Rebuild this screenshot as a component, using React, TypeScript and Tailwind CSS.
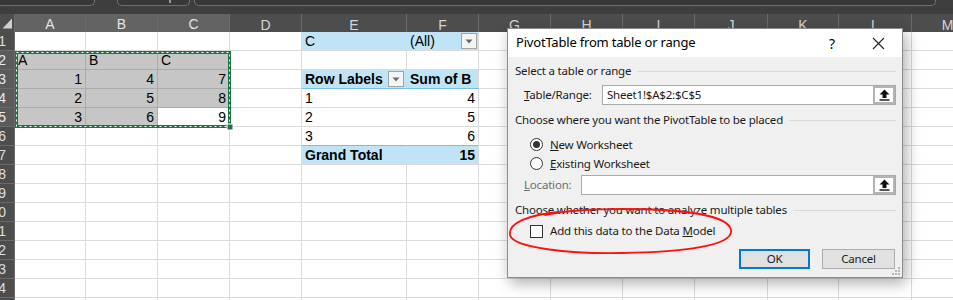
import React from 'react';

const GRID = 'grid grid-cols-[15px_71px_72px_72px_72px_105px_72px_72px_72px_72px_73px_71px_73px_72px]';
const COLS = ['A', 'B', 'C', 'D', 'E', 'F', 'G', 'H', 'I', 'J', 'K', 'L', 'M'];
const ROWS = [1, 2, 3, 4, 5, 6, 7, 8, 9, 10, 11, 12, 13, 14, 15];

const data: Record<number, string[]> = {
  2: ['A', 'B', 'C'],
  3: ['1', '4', '7'],
  4: ['2', '5', '8'],
  5: ['3', '6', '9'],
};

function Dropdown() {
  return (
    <div className="ml-auto flex h-[16px] w-[16px] shrink-0 items-center justify-center border border-[#a3a3a3] bg-[#f4f4f4]">
      <svg width="8" height="5" viewBox="0 0 8 5"><path d="M0.5 0.5h7L4 4.5z" fill="#6b6b6b" /></svg>
    </div>
  );
}

function Cell({ r, c }: { r: number; c: number }) {
  const base = 'flex h-[19px] items-center overflow-hidden whitespace-nowrap border-b border-r px-[3px] text-[14px] text-black';

  // source data A2:C5
  if (c < 3 && data[r]) {
    const txt = data[r][c];
    const white = r === 5 && c === 2;
    return (
      <div className={`${base} ${white ? 'bg-white' : 'bg-[#c6c6c6]'} border-[#ababab] ${r === 2 ? 'justify-start' : 'justify-end'}`}>
        {txt}
      </div>
    );
  }

  // pivot table E1:F7
  if (c === 4 || c === 5) {
    const first = c === 4;
    if (r === 1) {
      return (
        <div className={`${base} bg-[#c0e4f5] ${first ? 'border-[#c0e4f5] border-b-[#dadada]' : 'border-[#dadada] pr-[1px]'}`}>
          {first ? 'C' : <><span>(All)</span><Dropdown /></>}
        </div>
      );
    }
    if (r === 3) {
      return (
        <div className={`${base} bg-[#c0e4f5] font-bold border-b-[#7cbde6] ${first ? 'border-r-[#c0e4f5] pr-[2px]' : 'border-r-[#dadada]'}`}>
          {first ? <><span>Row Labels</span><Dropdown /></> : 'Sum of B'}
        </div>
      );
    }
    if (r >= 4 && r <= 6) {
      const v = first ? String(r - 3) : String(r);
      return (
        <div className={`${base} bg-white ${r === 6 ? 'border-b-[#7cbde6]' : 'border-b-[#dadada]'} ${first ? 'justify-start border-r-white' : 'justify-end border-r-[#dadada]'}`}>
          {v}
        </div>
      );
    }
    if (r === 7) {
      return (
        <div className={`${base} bg-[#c0e4f5] font-bold ${first ? 'justify-start border-[#c0e4f5] border-b-[#dadada]' : 'justify-end border-[#dadada]'}`}>
          {first ? 'Grand Total' : '15'}
        </div>
      );
    }
  }

  return <div className={`${base} border-[#dadada] bg-white`} />;
}

function UpArrowButton() {
  return (
    <div className="ml-auto flex h-full w-[22px] shrink-0 items-center justify-center border-2 border-[#b4b4b4] bg-white">
      <svg width="11" height="12" viewBox="0 0 11 12">
        <path d="M5.5 0.5L10.5 5.5H7.5V9H3.5V5.5H0.5z" fill="#111" />
        <rect x="0.5" y="10.3" width="10" height="1.4" fill="#111" />
      </svg>
    </div>
  );
}

function SectionHeader({ children }: { children: React.ReactNode }) {
  return (
    <div className="flex h-[20px] items-center">
      <span className="whitespace-nowrap">{children}</span>
      <div className="ml-[6px] h-px flex-1 bg-[#d9d9d9]" />
    </div>
  );
}

function Radio({ checked, children }: { checked?: boolean; children: React.ReactNode }) {
  return (
    <div className="flex h-[19px] items-center pl-[15px]">
      <div className="flex h-[13px] w-[13px] items-center justify-center rounded-full border border-[#333] bg-white">
        {checked && <div className="h-[7px] w-[7px] rounded-full bg-[#333]" />}
      </div>
      <span className="ml-[7px]">{children}</span>
    </div>
  );
}

function PivotDialog() {
  return (
    <div className="absolute left-[507px] top-[28px] flex h-[250px] w-[396px] flex-col border border-[#8c8c8c] bg-[#f0f0f0] font-['Noto_Sans',sans-serif] text-[11.5px] tracking-[-0.2px] text-[#1a1a1a] shadow-[3px_5px_14px_rgba(0,0,0,0.33)]">
      <div className="flex h-[28px] shrink-0 items-center bg-white pl-[8px] text-[13px] text-black">
        <span>PivotTable from table or range</span>
        <span className="ml-auto mr-[37px] text-[14px]">?</span>
        <svg className="mr-[17px]" width="13" height="13" viewBox="0 0 13 13">
          <path d="M1 1L12 12M12 1L1 12" stroke="#222" strokeWidth="1.1" />
        </svg>
      </div>

      <div className="flex flex-col pl-[7px] pr-[6px]">
        <div className="mt-[4px]"><SectionHeader>Select a table or range</SectionHeader></div>

        <div className="mt-[4px] flex h-[20px] items-center">
          <span className="w-[87px] pl-[9px]"><u>T</u>able/Range:</span>
          <div className="flex h-[20px] flex-1 items-center border border-[#a9a9a9] bg-white pl-[4px]">
            <span>Sheet1!$A$2:$C$5</span>
            <UpArrowButton />
          </div>
        </div>

        <div className="mt-[5px]"><SectionHeader>Choose where you want the PivotTable to be placed</SectionHeader></div>

        <div className="mt-[5px]">
          <Radio checked><u>N</u>ew Worksheet</Radio>
          <Radio><u>E</u>xisting Worksheet</Radio>
        </div>

        <div className="mt-[2px] flex h-[20px] items-center">
          <span className="w-[66px] pl-[9px] text-[#6d6d6d]"><u>L</u>ocation:</span>
          <div className="flex h-[20px] flex-1 items-center border border-[#a9a9a9] bg-white">
            <UpArrowButton />
          </div>
        </div>

        <div className="mt-[5px]"><SectionHeader>Choose whether you want to analyze multiple tables</SectionHeader></div>

        <div className="mt-[1px] flex h-[20px] items-center pl-[15px]">
          <div className="h-[13px] w-[13px] border border-[#333] bg-white" />
          <span className="ml-[7px]">Add this data to the Data <u>M</u>odel</span>
        </div>

        <div className="mt-[8px] flex h-[20px] justify-end gap-[12px] pr-[1px]">
          <button className="flex w-[71px] items-center justify-center border-2 border-[#0078d7] bg-[#e1e1e1]">OK</button>
          <button className="flex w-[73px] items-center justify-center border border-[#adadad] bg-[#e1e1e1]">Cancel</button>
        </div>
      </div>

      <svg className="absolute bottom-[2px] right-[2px]" width="8" height="8" viewBox="0 0 8 8" fill="#b5b5b5">
        <rect x="6" y="0" width="2" height="2" />
        <rect x="3" y="3" width="2" height="2" />
        <rect x="6" y="3" width="2" height="2" />
        <rect x="0" y="6" width="2" height="2" />
        <rect x="3" y="6" width="2" height="2" />
        <rect x="6" y="6" width="2" height="2" />
      </svg>
    </div>
  );
}

export default function App() {
  return (
    <div className="relative h-[300px] w-[953px] overflow-hidden bg-white font-['Liberation_Sans',Arial,sans-serif]">
      {/* formula bar remnants */}
      <div className="flex h-[14px] items-start bg-[#3e3e3e]">
        <div className="-ml-[5px] h-[6px] w-[100px] rounded-b-[5px] border border-t-0 border-[#717171] bg-[#383838]" />
        <div className="ml-[22px] flex h-[6px] w-[73px] justify-end rounded-b-[5px] border border-t-0 border-[#717171] bg-[#383838] pr-[18px]">
          <div className="h-[3px] w-[2px] bg-[#999]" />
        </div>
        <div className="ml-[4px] h-[6px] w-[742px] rounded-b-[5px] border border-t-0 border-[#717171] bg-[#383838]" />
      </div>

      {/* column headers */}
      <div className={`${GRID} h-[18px] bg-[#4d4d4d]`}>
        <div className="relative border-r border-[#6a6a6a]">
          <svg className="absolute left-[2px] top-[4px]" width="11" height="11" viewBox="0 0 11 11">
            <path d="M10 0.5V10.5H0.5z" fill="#cfcfcf" />
          </svg>
        </div>
        {COLS.map((col, i) =>
          i < 3 ? (
            <div key={col} className="flex items-center justify-center border-b-2 border-r border-[#6a6a6a] border-b-[#217346] bg-[#636363] text-[14px] text-[#e4e4e4]">
              {col}
            </div>
          ) : (
            <div key={col} className="flex items-center justify-center border-r border-[#6a6a6a] text-[14px] text-[#d6d6d6]">
              {col}
            </div>
          )
        )}
      </div>

      {/* sheet rows, row numbers scrolled partly out of view */}
      {ROWS.map(r => (
        <div key={r} className={GRID}>
          <div className={`flex h-[19px] items-center justify-end overflow-hidden border-b border-r border-[#6a6a6a] pr-[8px] text-[14px] ${r >= 2 && r <= 5 ? 'bg-[#5a5a5a] text-[#eaeaea]' : 'bg-[#4d4d4d] text-[#dedede]'}`}>
            {r}
          </div>
          {COLS.map((col, c) => <Cell key={col} r={r} c={c} />)}
        </div>
      ))}

      {/* copy marquee */}
      <svg className="pointer-events-none absolute inset-0" width="953" height="300" viewBox="0 0 953 300">
        <rect x="16.5" y="52.5" width="213" height="74" fill="none" stroke="#217346" strokeWidth="3" />
        <rect x="16.5" y="52.5" width="213" height="74" fill="none" stroke="#ffffff" strokeWidth="1" strokeDasharray="2 3" />
        <rect x="227" y="124" width="6" height="6" fill="#217346" stroke="#fff" strokeWidth="1" />
      </svg>

      <PivotDialog />

      {/* red annotation */}
      <svg className="pointer-events-none absolute inset-0" width="953" height="300" viewBox="0 0 953 300">
        <path
          d="M558 212 C528 215 508 223 510 235 C513 248 570 254 622 253 C682 252 734 246 731 230 C728 215 682 209 622 209 C588 209 565 211 545 215"
          fill="none"
          stroke="#ff1010"
          strokeWidth="1.8"
          strokeLinecap="round"
        />
      </svg>
    </div>
  );
}
